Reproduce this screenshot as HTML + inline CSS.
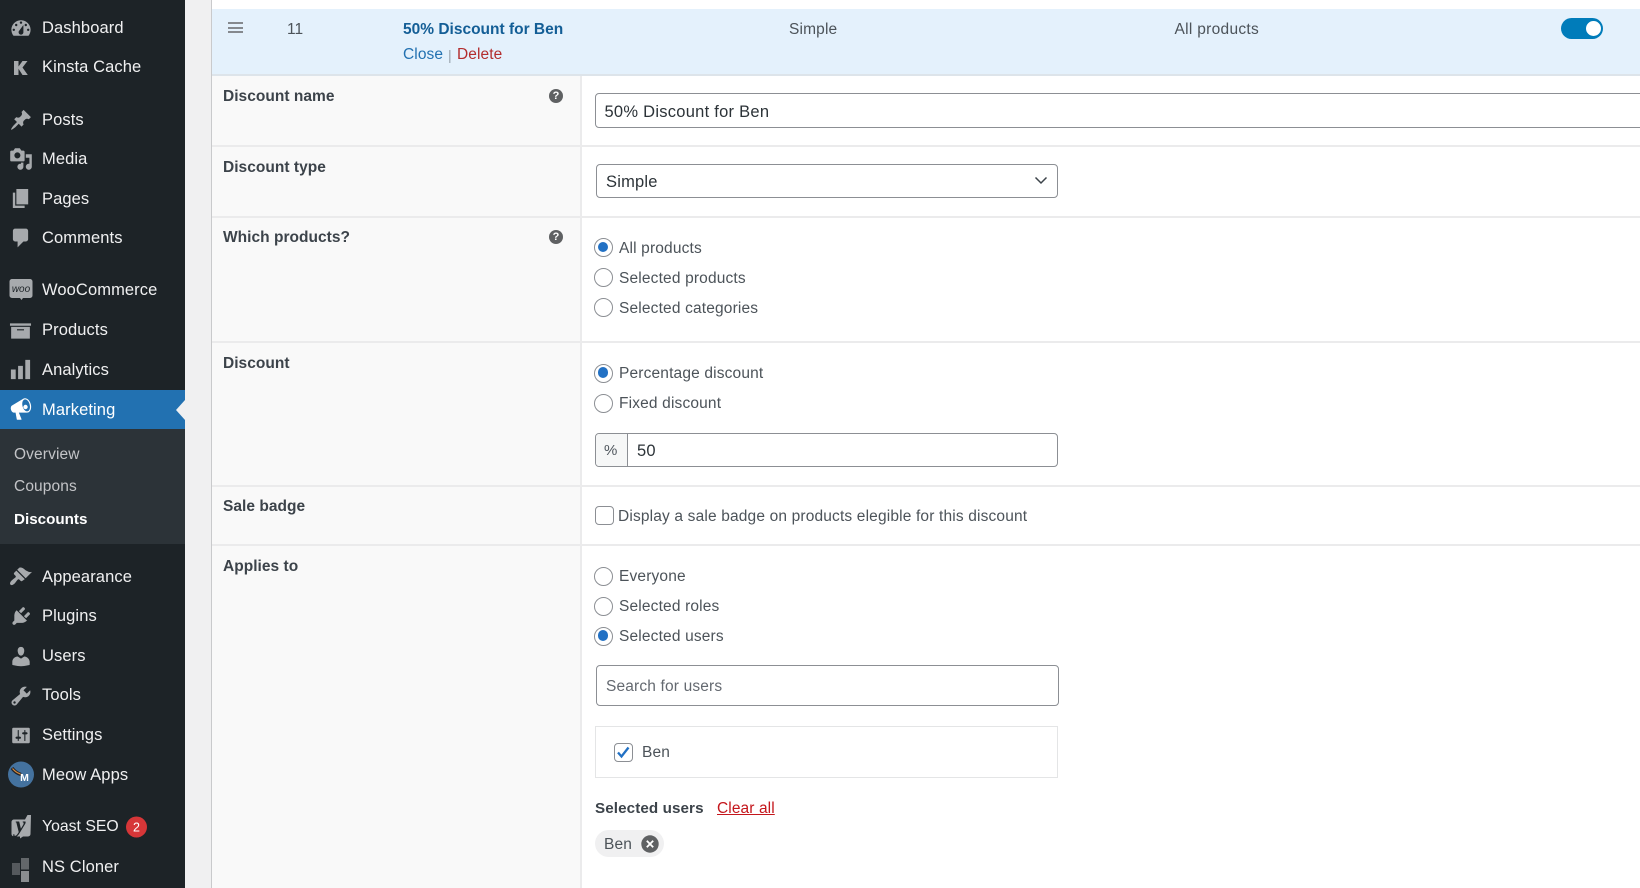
<!DOCTYPE html>
<html lang="en"><head><meta charset="utf-8"><title>Discounts</title>
<style>
html,body{margin:0;padding:0;width:1640px;height:888px;overflow:hidden;background:#f0f0f1;font-family:"Liberation Sans",Arial,sans-serif}
#w{position:absolute;left:0;top:0;width:1640px;height:888px;overflow:hidden;filter:blur(.35px)}
.a{position:absolute;box-sizing:border-box}
.t{position:absolute;white-space:nowrap;line-height:20px;height:20px}
.m{color:#f0f0f1;font-size:16.5px;letter-spacing:.1px;left:42px;margin-top:-.6px}
.s{color:#c3c4c7;font-size:15.5px;letter-spacing:.12px;left:14px}
.l{color:#3c434a;font-size:15.5px;font-weight:bold;left:223px;letter-spacing:.03px;margin-top:-.6px}
.b{color:#4c5359;font-size:15.5px;letter-spacing:.16px}
.r{position:absolute;box-sizing:border-box;width:19px;height:19px;border-radius:50%;border:1.5px solid #8c8f94;background:#fff;left:594px}
.r.on:after{content:"";position:absolute;left:2.75px;top:2.75px;width:10.5px;height:10.5px;border-radius:50%;background:#2271c4}
.f{position:absolute;box-sizing:border-box;background:#fff;border:1.5px solid #8c8f94;border-radius:4px}
.h{position:absolute;height:1.5px;background:#ebebec;left:212px;right:0}
</style></head><body><div id="w">
<div class="a" style="left:0;top:0;width:185px;height:888px;background:#1d2327"></div>
<div class="a" style="left:0;top:390px;width:185px;height:39px;background:#2271b1"></div>
<div class="a" style="left:0;top:429px;width:185px;height:115px;background:#2c3338"></div>
<div class="a" style="left:176px;top:400px;width:0;height:0;border:10px solid transparent;border-right:9px solid #f0f0f1;border-left:0"></div>

<div class="a" style="left:211px;top:0;width:1.5px;height:888px;background:#c9cacc"></div>
<div class="a" style="left:212px;top:0;right:0;height:888px;background:#fff"></div>
<div class="a" style="left:212px;top:75px;width:368px;height:813px;background:#f9f9f9"></div>
<div class="a" style="left:580px;top:75px;width:1.5px;height:813px;background:#ebebec"></div>
<div class="a" style="left:212px;top:9px;right:0;height:66px;background:#e4f1fc"></div>
<div class="a" style="left:212px;top:74px;right:0;height:2px;background:#dde4ea"></div>
<div class="h" style="top:145px"></div>
<div class="h" style="top:216px"></div>
<div class="h" style="top:341px"></div>
<div class="h" style="top:485px"></div>
<div class="h" style="top:544px"></div>

<span class="t m" style="top:18.5px">Dashboard</span>
<span class="t m" style="top:57.5px">Kinsta Cache</span>
<span class="t m" style="top:110.5px">Posts</span>
<span class="t m" style="top:149.5px">Media</span>
<span class="t m" style="top:189.5px">Pages</span>
<span class="t m" style="top:228.5px">Comments</span>
<span class="t m" style="top:280.5px">WooCommerce</span>
<span class="t m" style="top:320.5px">Products</span>
<span class="t m" style="top:360.5px">Analytics</span>
<span class="t m" style="top:400.5px;color:#fff">Marketing</span>
<span class="t s" style="top:444.5px">Overview</span>
<span class="t s" style="top:476.5px">Coupons</span>
<span class="t s" style="top:509.5px;color:#fff;font-weight:bold;font-size:15.2px;letter-spacing:0">Discounts</span>
<span class="t m" style="top:567.5px">Appearance</span>
<span class="t m" style="top:606.5px">Plugins</span>
<span class="t m" style="top:646.5px">Users</span>
<span class="t m" style="top:685.5px">Tools</span>
<span class="t m" style="top:725.5px">Settings</span>
<span class="t m" style="top:765.5px">Meow Apps</span>
<span class="t m" style="top:817.5px;font-size:15.8px;letter-spacing:0">Yoast SEO</span>
<span class="t m" style="top:857.5px">NS Cloner</span>

<svg class="a" style="left:0;top:0" width="185" height="888" viewBox="0 0 185 888">
<g fill="#a7aaad">
<path transform="translate(9,16.6) scale(1.2)" fill-rule="evenodd" d="M3.76 16h12.48c1.1-1.37 1.76-3.11 1.76-5 0-4.42-3.58-8-8-8s-8 3.58-8 8c0 1.89.66 3.63 1.76 5zM10 4c.55 0 1 .45 1 1s-.45 1-1 1-1-.45-1-1 .45-1 1-1zM6 6c.55 0 1 .45 1 1s-.45 1-1 1-1-.45-1-1 .45-1 1-1zm8 0c.55 0 1 .45 1 1s-.45 1-1 1-1-.45-1-1 .45-1 1-1zm-5.37 5.55L12 7v6c0 1.1-.9 2-2 2s-2-.9-2-2c0-.57.24-1.08.63-1.45zM4 10c.55 0 1 .45 1 1s-.45 1-1 1-1-.45-1-1 .45-1 1-1zm12 0c.55 0 1 .45 1 1s-.45 1-1 1-1-.45-1-1 .45-1 1-1z"/>
<path d="M14 61h4.5v5.5l4-5.5h5l-5 6.5 5.3 7.5h-5.3l-4-6.2v6.2H14z"/>
<path transform="translate(9.5,108.5) scale(1.15)" d="M10.44 3.02l1.82-1.82 6.36 6.35-1.83 1.82c-1.05-.68-2.48-.57-3.41.36l-.75.75c-.92.93-1.04 2.35-.35 3.41l-1.83 1.82-2.41-2.41-2.8 2.79c-.42.42-3.38 2.71-3.8 2.29s1.86-3.39 2.28-3.81l2.79-2.79L4.1 9.36l1.83-1.82c1.05.69 2.48.57 3.4-.36l.75-.75c.93-.92 1.05-2.35.36-3.41z"/>
<path transform="translate(9,147) scale(1.2)" fill-rule="evenodd" d="M13 11V4c0-.55-.45-1-1-1h-1.67L9 1H5L3.67 3H2c-.55 0-1 .45-1 1v7c0 .55.45 1 1 1h10c.55 0 1-.45 1-1zM7 4.5c1.38 0 2.5 1.12 2.5 2.5S8.38 9.5 7 9.5 4.5 8.38 4.5 7 5.62 4.5 7 4.5zM14 6h5v10.5c0 1.38-1.12 2.5-2.5 2.5S14 17.88 14 16.5s1.12-2.5 2.5-2.5c.17 0 .34.02.5.05V9h-3V6zm-4 8.05V13h2v3.5c0 1.38-1.12 2.5-2.5 2.5S7 17.88 7 16.5 8.12 14 9.5 14c.17 0 .34.02.5.05z"/>
<path transform="translate(9.3,186.7) scale(1.18)" d="M6 15V2h10v13H6zm-1 1h8v2H3V5h2v11z"/>
<path transform="translate(9.4,226.3) scale(1.17)" d="M5 2h9c1.1 0 2 .9 2 2v7c0 1.1-.9 2-2 2h-2l-5 5v-5H5c-1.1 0-2-.9-2-2V4c0-1.1.9-2 2-2z"/>
<path d="M12 279h18a2.5 2.5 0 0 1 2.5 2.5v14a2.5 2.5 0 0 1-2.5 2.5h-7l-1.5 2-1.5-2h-8a2.5 2.5 0 0 1-2.5-2.5v-14a2.5 2.5 0 0 1 2.5-2.5z"/>
<path transform="translate(8.8,318.7) scale(1.17)" fill-rule="evenodd" d="M19 4v2H1V4h18zM2 7h16v10H2V7zm11 3V9H7v1h6z"/>
<path transform="translate(8.5,357.5) scale(1.2)" d="M18 18V2h-4v16h4zm-6 0V7H8v11h4zm-6 0v-8H2v8h4z"/>
<path transform="translate(8.3,565) scale(1.2)" d="M14.48 11.06L7.41 3.99l1.5-1.5c.5-.56 2.3-.47 3.51.32 1.21.8 1.43 1.28 2.91 2.1 1.18.64 2.45 1.26 4.45.85zm-.71.71L6.7 4.7 4.93 6.47c-.39.39-.39 1.02 0 1.41l1.06 1.06c.39.39.39 1.03 0 1.42-.6.6-1.43 1.11-2.21 1.69-.35.26-.7.53-1.01.84-1.28 1.28-1.7 2.7-.94 3.46.76.76 2.18.34 3.46-.94.31-.31.58-.66.84-1.01.58-.78 1.09-1.61 1.69-2.21.39-.39 1.03-.39 1.42 0l1.06 1.06c.39.39 1.02.39 1.41 0z"/>
<path transform="translate(9.7,604.5) scale(1.15)" d="M13.11 4.36L9.87 7.6 8 5.73l3.24-3.24c.35-.34 1.05-.2 1.56.32.52.51.66 1.21.31 1.55zm-8 1.77l.91-1.12 9.01 9.01-1.19.84c-.71.71-2.63 1.16-3.82 1.16H6.14L4.9 17.26c-.59.59-1.54.59-2.12 0-.59-.58-.59-1.53 0-2.12l1.24-1.24v-3.88c0-1.13.4-3.19 1.09-3.89zm7.26 3.97l3.24-3.24c.34-.35 1.04-.21 1.55.31.52.51.66 1.21.31 1.55l-3.24 3.25z"/>
<path transform="translate(9,644.5) scale(1.2)" d="M10 9.25c-2.27 0-2.73-3.44-2.73-3.44C7 4.02 7.82 2 9.97 2c2.16 0 2.98 2.02 2.71 3.81 0 0-.41 3.44-2.68 3.44zm0 2.57L12.72 10c2.39 0 4.52 2.33 4.52 4.53v2.49s-3.65 1.13-7.24 1.13c-3.65 0-7.24-1.13-7.24-1.13v-2.49c0-2.25 1.94-4.48 4.47-4.48z"/>
<path transform="translate(9.2,684.2) scale(1.18)" fill-rule="evenodd" d="M16.68 9.77c-1.34 1.34-3.3 1.67-4.95.99l-5.41 6.52c-.99.99-2.59.99-3.58 0s-.99-2.59 0-3.57l6.52-5.42c-.68-1.65-.35-3.61.99-4.95 1.28-1.28 3.12-1.62 4.72-1.06l-2.89 2.89 2.82 2.82 2.86-2.87c.53 1.58.18 3.39-1.08 4.65zM3.81 16.21c.4.39 1.04.39 1.43 0 .4-.4.4-1.04 0-1.43-.39-.4-1.03-.4-1.43 0-.39.39-.39 1.03 0 1.43z"/>
<path transform="translate(10,724.5) scale(1.1)" fill-rule="evenodd" d="M18 16V4c0-.55-.45-1-1-1H3c-.55 0-1 .45-1 1v12c0 .55.45 1 1 1h14c.55 0 1-.45 1-1zM8 11h1c.55 0 1 .45 1 1s-.45 1-1 1H8v1.5c0 .28-.22.5-.5.5s-.5-.22-.5-.5V13H6c-.55 0-1-.45-1-1s.45-1 1-1h1V5.5c0-.28.22-.5.5-.5s.5.22.5.5V11zm5-2h-1c-.55 0-1-.45-1-1s.45-1 1-1h1V5.5c0-.28.22-.5.5-.5s.5.22.5.5V7h1c.55 0 1 .45 1 1s-.45 1-1 1h-1v5.5c0 .28-.22.5-.5.5s-.5-.22-.5-.5V9z"/>
<path d="M14 819.5h11l2.5-4.5h3.5l-.5 19a2.5 2.5 0 0 1-2.5 2.5h-5l-3 2v-2h-6a2.5 2.5 0 0 1-2.5-2.5v-12a2.5 2.5 0 0 1 2.5-2.5z"/>
</g>
<text x="21" y="292" text-anchor="middle" font-size="10" font-style="italic" fill="#1d2327" font-family="Liberation Sans">woo</text>
<path fill="#fff" transform="translate(9,397) scale(1.2)" fill-rule="evenodd" d="M18.15 5.94c.46 1.62.38 3.22-.02 4.48-.42 1.28-1.26 2.18-2.3 2.48-.16.06-.26.06-.4.06-.06.02-.12.02-.18.02-.06.02-.14.02-.22.02h-6.8l2.22 5.5c.02.14-.06.26-.14.34-.08.1-.24.16-.34.16H6.95c-.1 0-.26-.06-.34-.16-.08-.08-.16-.2-.14-.34l-1-5.5H4.25c-.5.06-1.08-.18-1.54-.62s-.88-1.08-1.06-1.88c-.24-.8-.2-1.56-.02-2.2.18-.62.58-1.08 1.06-1.3l9-5.42c.1-.06.18-.1.24-.16.06-.04.14-.08.24-.12.16-.08.28-.12.5-.18 1.04-.3 2.24.1 3.22 1 .98.88 1.84 2.24 2.26 3.86zm-2.58 5.98c.4-.1.74-.34 1.04-.7.58-.7.86-1.76.86-3.04-.02-.64-.1-1.3-.28-1.98-.34-1.36-1.02-2.5-1.78-3.24s-1.68-1.1-2.46-.88c-.82.22-1.4.96-1.7 2-.32 1.04-.28 2.36.06 3.72.38 1.36 1 2.5 1.8 3.24.78.74 1.62 1.1 2.48.88z"/>
<circle cx="25.5" cy="407" r="2.2" fill="#fff"/>
<circle cx="21" cy="774.5" r="13" fill="#44729f"/>
<path d="M12 768c2.5 3.5 5.5 5.5 9 6.5" stroke="#20232a" stroke-width="3.4" fill="none"/>
<path d="M12.5 768.5c2.5 3 5 4.6 8 5.5" stroke="#d7893c" stroke-width="1.2" fill="none"/>
<text x="24.5" y="781" text-anchor="middle" font-size="10.5" font-weight="bold" fill="#fff" font-family="Liberation Sans">M</text>
<text x="20.5" y="832" text-anchor="middle" font-size="23" font-weight="bold" font-style="italic" fill="#1d2327" font-family="Liberation Serif">y</text>
<circle cx="136.5" cy="827" r="10.5" fill="#d63638"/>
<text x="136.5" y="831.5" text-anchor="middle" font-size="12.5" fill="#fff" font-family="Liberation Sans">2</text>
<rect x="12" y="863" width="8" height="12" fill="#55595d"/>
<rect x="21" y="858" width="8" height="11.5" fill="#63676a"/>
<rect x="21" y="871" width="8" height="11" fill="#8a8d90"/>
</svg>

<!-- header -->
<div class="a" style="left:227.5px;top:22px;width:15px;height:2px;background:#85898e"></div>
<div class="a" style="left:227.5px;top:26.5px;width:15px;height:2px;background:#85898e"></div>
<div class="a" style="left:227.5px;top:31px;width:15px;height:2px;background:#85898e"></div>
<span class="t b" style="left:287px;top:20px;letter-spacing:0">11</span>
<span class="t" style="left:403px;top:20px;color:#135e96;font-size:15.5px;font-weight:bold;letter-spacing:0">50% Discount for Ben</span>
<span class="t" style="left:403px;top:45px;color:#2271b1;font-size:15.5px;letter-spacing:.1px">Close</span>
<span class="t" style="left:448px;top:45px;color:#9aa5ae;font-size:14px">|</span>
<span class="t" style="left:457px;top:45px;color:#b32d2e;font-size:15.5px;letter-spacing:.1px">Delete</span>
<span class="t b" style="left:789px;top:20px">Simple</span>
<span class="t b" style="left:1174.5px;top:20px;letter-spacing:.3px">All products</span>
<div class="a" style="left:1561px;top:18px;width:42px;height:21px;border-radius:11px;background:#007cba"></div>
<div class="a" style="left:1585.5px;top:21px;width:15px;height:15px;border-radius:50%;background:#fff"></div>

<!-- labels -->
<span class="t l" style="top:87.5px">Discount name</span>
<span class="t l" style="top:158.5px">Discount type</span>
<span class="t l" style="top:228.5px">Which products?</span>
<span class="t l" style="top:354.5px">Discount</span>
<span class="t l" style="top:497.5px">Sale badge</span>
<span class="t l" style="top:557.5px">Applies to</span>
<div class="a" style="left:549px;top:88.5px;width:14px;height:14px;border-radius:50%;background:#5f6163;color:#fff;font:bold 11px/14px 'Liberation Sans';text-align:center">?</div>
<div class="a" style="left:549px;top:229.5px;width:14px;height:14px;border-radius:50%;background:#5f6163;color:#fff;font:bold 11px/14px 'Liberation Sans';text-align:center">?</div>

<!-- fields -->
<div class="f" style="left:595px;top:93px;width:1060px;height:35px"></div>
<span class="t" style="left:604.5px;top:101.5px;color:#2c3338;font-size:16.5px;letter-spacing:.26px">50% Discount for Ben</span>
<div class="f" style="left:596px;top:164px;width:462px;height:34px"></div>
<span class="t" style="left:606px;top:171.5px;color:#2c3338;font-size:16.5px;letter-spacing:.2px">Simple</span>
<svg class="a" style="left:1033px;top:175px" width="16" height="12" viewBox="0 0 16 12"><path d="M2.5 2.5L8 8l5.5-5.5" fill="none" stroke="#3c434a" stroke-width="1.5"/></svg>

<div class="r on" style="top:238px"></div><span class="t b" style="left:619px;top:238.5px">All products</span>
<div class="r" style="top:268px"></div><span class="t b" style="left:619px;top:268.5px">Selected products</span>
<div class="r" style="top:298px"></div><span class="t b" style="left:619px;top:298.5px">Selected categories</span>
<div class="r on" style="top:363.5px"></div><span class="t b" style="left:619px;top:363.5px">Percentage discount</span>
<div class="r" style="top:393.5px"></div><span class="t b" style="left:619px;top:393.5px">Fixed discount</span>

<div class="f" style="left:595px;top:433px;width:462.5px;height:34px;overflow:hidden"><div class="a" style="left:0;top:0;width:32px;height:32px;background:#f6f7f7;border-right:1.5px solid #8c8f94"></div></div>
<span class="t" style="left:604px;top:440.5px;color:#50575e;font-size:15px">%</span>
<span class="t" style="left:637px;top:440.5px;color:#2c3338;font-size:16.5px;letter-spacing:.26px">50</span>

<div class="f" style="left:595px;top:506px;width:18.5px;height:18.5px"></div>
<span class="t b" style="left:618px;top:506.5px">Display a sale badge on products elegible for this discount</span>

<div class="r" style="top:566.5px"></div><span class="t b" style="left:619px;top:566.5px">Everyone</span>
<div class="r" style="top:596.5px"></div><span class="t b" style="left:619px;top:596.5px">Selected roles</span>
<div class="r on" style="top:626.5px"></div><span class="t b" style="left:619px;top:626.5px">Selected users</span>

<div class="f" style="left:596px;top:665px;width:462.5px;height:41px"></div>
<span class="t b" style="left:606px;top:677px;color:#646970">Search for users</span>

<div class="a" style="left:595px;top:726px;width:462.5px;height:52px;border:1.5px solid #e4e5e6;background:#fff"></div>
<div class="f" style="left:614px;top:743px;width:19px;height:19px"></div>
<svg class="a" style="left:614px;top:743px" width="19" height="19" viewBox="0 0 19 19"><path d="M4 9.5l3.5 4L14.5 4.5" fill="none" stroke="#2271c4" stroke-width="2.3"/></svg>
<span class="t b" style="left:642px;top:742.5px">Ben</span>

<span class="t" style="left:595px;top:798.5px;color:#3c434a;font-size:15.2px;font-weight:bold;letter-spacing:.1px">Selected users</span>
<span class="t" style="left:717px;top:798.5px;color:#c4161c;font-size:15.5px;letter-spacing:.1px;text-decoration:underline">Clear all</span>

<div class="a" style="left:595px;top:830px;width:68.5px;height:27px;border-radius:14px;background:#f0f0f1"></div>
<span class="t b" style="left:604px;top:834.5px">Ben</span>
<svg class="a" style="left:641px;top:835px" width="18" height="18" viewBox="0 0 18 18"><circle cx="9" cy="9" r="8.7" fill="#5f6163"/><path d="M5.8 5.8l6.4 6.4M12.2 5.8l-6.4 6.4" stroke="#fff" stroke-width="1.8"/></svg>
</div></body></html>
